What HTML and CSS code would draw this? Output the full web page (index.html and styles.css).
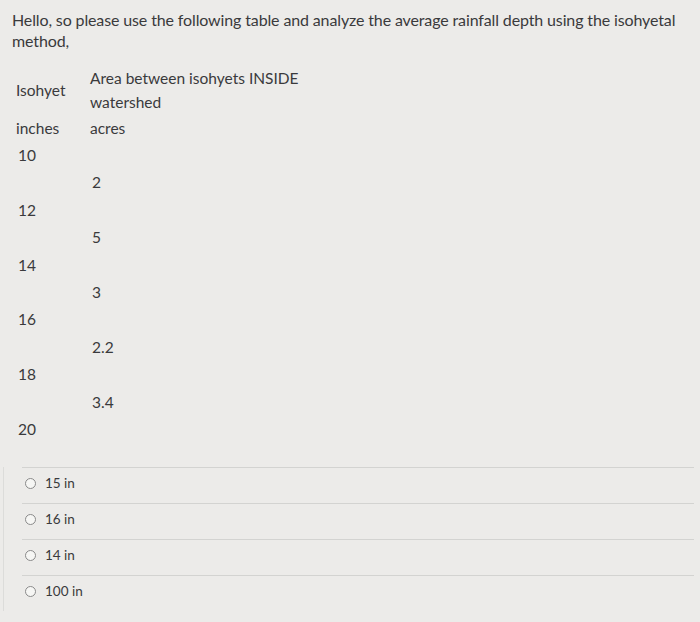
FILE: index.html
```
<!DOCTYPE html>
<html>
<head>
<meta charset="utf-8">
<link rel="stylesheet" href="styles.css">
</head>
<body>
<div class="page">
  <p class="question">Hello, so please use the following table and analyze the average rainfall depth using the isohyetal method,</p>
  <div class="table">
    <div class="head">
      <div class="c1 mid">Isohyet</div>
      <div class="c2 two">Area between isohyets INSIDE<br>watershed</div>
    </div>
    <div class="units">
      <div class="c1">inches</div>
      <div class="c2">acres</div>
    </div>
    <div class="row"><div class="c1 num">10</div><div class="c2"></div></div>
    <div class="row"><div class="c1"></div><div class="c2 num">2</div></div>
    <div class="row"><div class="c1 num">12</div><div class="c2"></div></div>
    <div class="row"><div class="c1"></div><div class="c2 num">5</div></div>
    <div class="row"><div class="c1 num">14</div><div class="c2"></div></div>
    <div class="row"><div class="c1"></div><div class="c2 num">3</div></div>
    <div class="row"><div class="c1 num">16</div><div class="c2"></div></div>
    <div class="row"><div class="c1"></div><div class="c2 num">2.2</div></div>
    <div class="row"><div class="c1 num">18</div><div class="c2"></div></div>
    <div class="row"><div class="c1"></div><div class="c2 num">3.4</div></div>
    <div class="row"><div class="c1 num">20</div><div class="c2"></div></div>
  </div>
  <div class="options">
    <label class="option"><span class="radio"></span><span class="opt-text">15 in</span></label>
    <label class="option"><span class="radio"></span><span class="opt-text">16 in</span></label>
    <label class="option"><span class="radio"></span><span class="opt-text">14 in</span></label>
    <label class="option"><span class="radio"></span><span class="opt-text">100 in</span></label>
  </div>
</div>
</body>
</html>
```
FILE: styles.css
```
html, body {
  margin: 0;
  padding: 0;
  background: #ecebe9;
}
body {
  font-family: Lato, "Open Sans", sans-serif;
  color: #3a3a3c;
  font-size: 15.5px;
}
.page {
  width: 700px;
  height: 622px;
  overflow: hidden;
}
.question {
  margin: 0;
  padding: 9px 10px 0 12px;
  line-height: 21px;
  font-size: 16px;
  letter-spacing: -0.13px;
}
.table {
  margin-top: 15px;
  padding-left: 16px;
}
.head, .units, .row {
  display: grid;
  grid-template-columns: 74px 1fr;
}
.head {
  height: 48px;
  line-height: 24px;
  align-items: center;
}
.units {
  height: 28px;
  line-height: 28px;
  align-items: center;
}
.row {
  height: 27.4px;
  line-height: 27.4px;
}
.num {
  padding-left: 2px;
}
.options {
  margin-top: 24px;
  padding-left: 18px;
  padding-right: 6px;
  border-left: 1px solid #dcdcda;
  margin-left: 3px;
}
.option {
  display: flex;
  align-items: center;
  gap: 9px;
  height: 36px;
  border-top: 1px solid #d3d3d1;
  padding-left: 3px;
  padding-bottom: 5px;
  font-size: 13.5px;
  box-sizing: border-box;
}
.radio {
  width: 11px;
  height: 11px;
  border: 1.3px solid #8a8a8a;
  border-radius: 50%;
  background: #f6f6f4;
  box-sizing: border-box;
}
```
